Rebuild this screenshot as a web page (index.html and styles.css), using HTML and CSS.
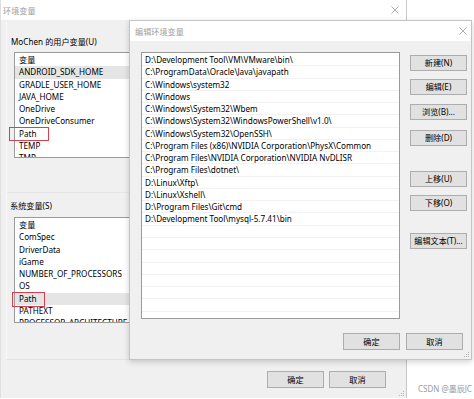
FILE: index.html
```html
<!DOCTYPE html>
<html lang="zh">
<head>
<meta charset="utf-8">
<title>环境变量</title>
<link rel="stylesheet" href="styles.css">
</head>
<body>
<div class="desk">
  <div class="win back">
    <div class="titlebar">
      <span class="title">环境变量</span>
      <svg class="close" width="8" height="8" viewBox="0 0 8 8"><path d="M0.5 0.5L7.5 7.5M7.5 0.5L0.5 7.5" stroke="#9a9a9a" stroke-width="0.8" fill="none"/></svg>
    </div>
    <div class="body">
      <div class="page">
        <section class="group user">
          <div class="glabel">MoChen 的用户变量(U)</div>
          <div class="listbox">
            <div class="row head">变量</div>
            <div class="row hover">ANDROID_SDK_HOME</div>
            <div class="row">GRADLE_USER_HOME</div>
            <div class="row">JAVA_HOME</div>
            <div class="row">OneDrive</div>
            <div class="row">OneDriveConsumer</div>
            <div class="row">Path</div>
            <div class="row">TEMP</div>
            <div class="row">TMP</div>
          </div>
          <div class="annot annot-u"></div>
        </section>
        <section class="group sys">
          <div class="glabel">系统变量(S)</div>
          <div class="listbox">
            <div class="row head">变量</div>
            <div class="row">ComSpec</div>
            <div class="row">DriverData</div>
            <div class="row">iGame</div>
            <div class="row">NUMBER_OF_PROCESSORS</div>
            <div class="row">OS</div>
            <div class="row hover">Path</div>
            <div class="row">PATHEXT</div>
            <div class="row">PROCESSOR_ARCHITECTURE</div>
          </div>
          <div class="annot annot-s"></div>
        </section>
      </div>
      <div class="footer">
        <button class="btn">确定</button>
        <button class="btn">取消</button>
      </div>
    </div>
    <svg class="grip" width="6" height="6" viewBox="0 0 6 6"><g fill="#b5b5b5"><rect x="4" y="0" width="1" height="1"/><rect x="2" y="2" width="1" height="1"/><rect x="4" y="2" width="1" height="1"/><rect x="0" y="4" width="1" height="1"/><rect x="2" y="4" width="1" height="1"/><rect x="4" y="4" width="1" height="1"/></g></svg>
  </div>

  <div class="win front">
    <div class="titlebar">
      <span class="title">编辑环境变量</span>
      <svg class="close" width="8" height="8" viewBox="0 0 8 8"><path d="M0.5 0.5L7.5 7.5M7.5 0.5L0.5 7.5" stroke="#9a9a9a" stroke-width="0.8" fill="none"/></svg>
    </div>
    <div class="body">
      <div class="main">
        <div class="pathlist">
          <div class="prow">D:\Development Tool\VM\VMware\bin\</div>
          <div class="prow">C:\ProgramData\Oracle\Java\javapath</div>
          <div class="prow">C:\Windows\system32</div>
          <div class="prow">C:\Windows</div>
          <div class="prow">C:\Windows\System32\Wbem</div>
          <div class="prow">C:\Windows\System32\WindowsPowerShell\v1.0\</div>
          <div class="prow">C:\Windows\System32\OpenSSH\</div>
          <div class="prow">C:\Program Files (x86)\NVIDIA Corporation\PhysX\Common</div>
          <div class="prow">C:\Program Files\NVIDIA Corporation\NVIDIA NvDLISR</div>
          <div class="prow">C:\Program Files\dotnet\</div>
          <div class="prow">D:\Linux\Xftp\</div>
          <div class="prow">D:\Linux\Xshell\</div>
          <div class="prow">D:\Program Files\Git\cmd</div>
          <div class="prow">D:\Development Tool\mysql-5.7.41\bin</div>
          <div class="prow"></div>
          <div class="prow"></div>
          <div class="prow"></div>
          <div class="prow"></div>
          <div class="prow"></div>
          <div class="prow"></div>
          <div class="prow"></div>
        </div>
        <div class="side">
          <button class="btn">新建(N)</button>
          <button class="btn b2">编辑(E)</button>
          <button class="btn b3">浏览(B)...</button>
          <button class="btn b4">删除(D)</button>
          <button class="btn b5">上移(U)</button>
          <button class="btn b6">下移(O)</button>
          <button class="btn b7">编辑文本(T)...</button>
        </div>
      </div>
      <div class="footer">
        <button class="btn">确定</button>
        <button class="btn">取消</button>
      </div>
    </div>
    <svg class="grip" width="6" height="6" viewBox="0 0 6 6"><g fill="#b5b5b5"><rect x="4" y="0" width="1" height="1"/><rect x="2" y="2" width="1" height="1"/><rect x="4" y="2" width="1" height="1"/><rect x="0" y="4" width="1" height="1"/><rect x="2" y="4" width="1" height="1"/><rect x="4" y="4" width="1" height="1"/></g></svg>
  </div>

  <div class="watermark">CSDN @墨辰JC</div>
</div>
</body>
</html>
```
FILE: styles.css
```css
* { box-sizing: border-box; }
html, body { margin: 0; padding: 0; }
body {
  width: 474px;
  height: 399px;
  overflow: hidden;
  background: #fff;
  font-family: "Noto Sans", "Noto Sans CJK SC", sans-serif;
  font-size: 8.15px;
  color: #000;
}
.desk { position: relative; width: 474px; height: 399px; }

.win { position: absolute; display: flex; flex-direction: column; background: #f0f0f0; }
.titlebar {
  height: 20px;
  flex: none;
  background: #fff;
  display: flex;
  align-items: center;
  justify-content: space-between;
  color: #a0a0a0;
}
.body { flex: 1; display: flex; flex-direction: column; min-height: 0; }
.grip { position: absolute; right: 1px; bottom: 1px; }

/* back window */
.back {
  left: 0; top: 0; width: 407px; height: 398px;
  border-right: 1px solid #c8c8c8;
  border-left: 1px solid #e0e0e0;
}
.back .titlebar { padding: 0 7px 0 2px; }
.back .body { padding: 2px 0 0 5px; }
.page {
  height: 338px;
  flex: none;
  border-left: 1px solid #fbfbfb;
  border-bottom: 1px solid #e3e3e3;
  display: flex;
  flex-direction: column;
}
.group { display: flex; flex-direction: column; flex: none; position: relative; }
.group.user { height: 171px; border-bottom: 1px solid #e6e6e6; padding-top: 13px; }
.group.sys { padding-top: 6px; }
.glabel { height: 14px; line-height: 14px; padding-left: 4px; margin-bottom: 3px; }
.group.sys .glabel { padding-left: 3px; margin-bottom: 4px; }
.listbox {
  margin-left: 7px;
  width: 385px;
  height: 106px;
  background: #fff;
  border: 1px solid #9a9a9a;
  padding-top: 1px;
  overflow: hidden;
}
.row {
  height: 12.27px;
  line-height: 12.27px;
  padding-left: 4px;
  white-space: nowrap;
}
.row.hover { background: #e5e5e5; }

/* red annotation boxes drawn over the lists */
.annot {
  position: absolute;
  border: 1.2px solid #d6404e;
  pointer-events: none;
}
.annot-u { left: 2px; top: 105px; width: 40px; height: 14px; }
.annot-s { left: 5px; top: 99px; width: 33px; height: 15px; }

.back .footer {
  flex: 1;
  display: flex;
  justify-content: flex-end;
  align-items: flex-start;
  gap: 5px;
  padding: 11px 20px 0 0;
}

/* buttons */
.btn {
  width: 57px;
  height: 17px;
  padding: 0;
  margin: 0;
  font: inherit;
  color: #000;
  background: #e1e1e1;
  border: 1px solid #adadad;
  line-height: 15px;
  text-align: center;
}

/* front window */
.front {
  left: 129px; top: 20px; width: 343px; height: 340px;
  border: 1px solid #c4c4c4;
  box-shadow: 0 2px 6px rgba(0,0,0,0.18);
}
.front .titlebar { padding: 0 4px 0 5px; }
.front .body { padding: 11px 4px 0 11px; }
.main { display: flex; gap: 10px; }
.pathlist {
  width: 259px;
  height: 267px;
  background: #fff;
  border: 1px solid #9a9a9a;
  padding: 1px 0 0 0;
  overflow: hidden;
}
.prow {
  height: 12.27px;
  line-height: 12.27px;
  padding-left: 3px;
  border-bottom: 1px solid #f2f2f2;
  white-space: nowrap;
  overflow: hidden;
}
.side { display: flex; flex-direction: column; padding-top: 3px; }
.side .btn { height: 16px; line-height: 14px; }
.side .b2 { margin-top: 8px; }
.side .b3 { margin-top: 9px; }
.side .b4 { margin-top: 10px; }
.side .b5 { margin-top: 25px; }
.side .b6 { margin-top: 8px; }
.side .b7 { margin-top: 22px; }
.front .footer {
  display: flex;
  justify-content: flex-end;
  gap: 6px;
  padding: 14px 4px 0 0;
}

.watermark {
  position: absolute;
  left: 418px;
  top: 383px;
  font-size: 8px;
  color: #9c9c9c;
  white-space: nowrap;
}
```
